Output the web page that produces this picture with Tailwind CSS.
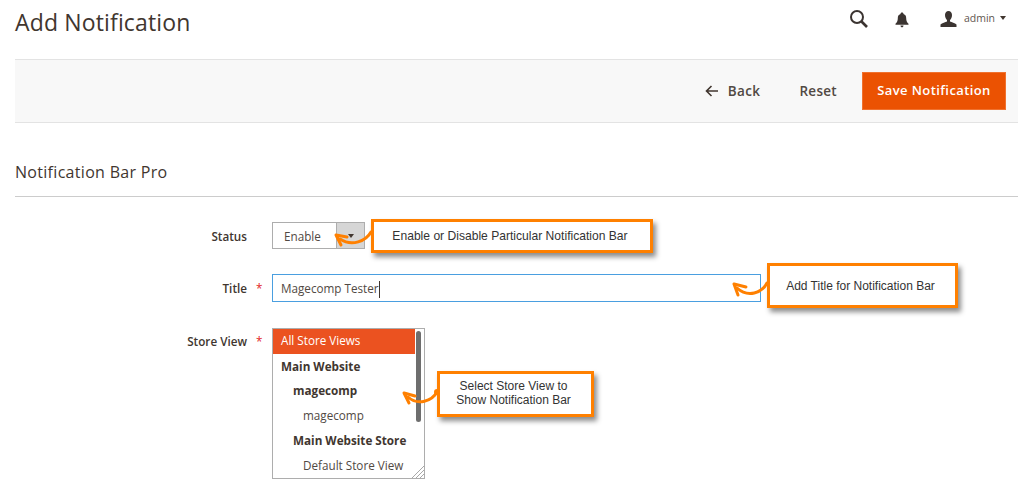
<!DOCTYPE html>
<html lang="en">
<head>
  <meta charset="UTF-8" />
  <title>Add Notification</title>
  <script src="https://cdn.jsdelivr.net/npm/@tailwindcss/browser@4"></script>
</head>
<body class="bg-white text-[#41362f] font-['Open_Sans',sans-serif] h-[488px] overflow-hidden relative">

  <!-- Header -->
  <header class="h-[59px] pl-[15px] pr-[18px] flex justify-between">
    <h1 class="text-[23px] leading-[45px] text-[#41362f] tracking-[0.15px]">Add Notification</h1>
    <div class="flex items-start pt-[9px]">
      <svg class="w-[20px] h-[20px] mr-[26px]" viewBox="0 0 20 20" fill="none" stroke="#3b3431" stroke-width="2"><circle cx="8" cy="8" r="6"/><path d="M12.5 12.5l5.5 5.5" stroke-width="2.6"/></svg>
      <svg class="w-[14px] h-[16px] mt-[3px] mr-[31px]" viewBox="0 0 14 16" fill="#3b3431"><path d="M7 0.5c1 0 1.4.6 1.5 1.4 2 .6 2.7 2.2 2.7 4.3 0 2.5.8 4.2 2.3 5.600v.9H.5v-.9C2 10.400 2.800 8.700 2.800 6.200c0-2.100.7-3.700 2.700-4.300C5.600 1.100 6 .5 7 .5z"/><path d="M5.500 13.500h3c0 1-.6 1.800-1.500 1.800s-1.500-.8-1.500-1.800z"/></svg>
      <svg class="w-[17px] h-[16px] mt-[2px] mr-[7px]" viewBox="0 0 17 16" fill="#3b3431"><path d="M8.500 0c2.200 0 3.500 1.700 3.500 4s-1 4.200-2 5v1.500c1.500.8 5 1.500 6.500 3V16H.5v-2.500c1.500-1.500 5-2.200 6.500-3V9C6 8.200 5 6.300 5 4s1.300-4 3.500-4z"/></svg>
      <span class="text-[10.500px] leading-[18px] text-[#5f5650]">admin</span>
      <span class="ml-[5px] mt-[7px] border-x-[3.500px] border-x-transparent border-t-[4px] border-t-[#41362f]"></span>
    </div>
  </header>

  <!-- Action bar -->
  <div class="ml-[15px] mr-[6px] h-[64px] bg-[#f8f8f8] border-y border-[#e3e3e3] flex items-center justify-end pr-[12px]">
    <svg class="w-[13px] h-[12px] mr-[10px]" viewBox="0 0 13 12" fill="none" stroke="#41362f" stroke-width="1.600"><path d="M13 6H1.500M6.500 1L1.500 6l5 5"/></svg>
    <span class="text-[13.500px] font-semibold tracking-[0.4px] text-[#514943] mr-[39px]">Back</span>
    <span class="text-[13.500px] font-semibold tracking-[0.3px] text-[#514943] mr-[25px]">Reset</span>
    <button class="w-[144px] h-[38px] bg-[#eb5202] border border-[#f0722f] text-white text-[13px] font-semibold tracking-[0.4px]">Save Notification</button>
  </div>

  <!-- Section -->
  <section class="ml-[15px] mr-[6px] mt-[37px] h-[37px] border-b border-[#cccccc]">
    <h2 class="text-[16px] leading-[24px] tracking-[0.3px] text-[#41362f]">Notification Bar Pro</h2>
  </section>

  <!-- Form -->
  <main class="pt-[25px] text-[11.700px]">
    <div class="flex items-center h-[27px]">
      <label class="w-[247px] text-right font-semibold text-[#41362f] pt-[2px]">Status</label>
      <div class="ml-[25px] w-[93px] h-[27px] border border-[#adadad] flex">
        <span class="flex-1 pl-[11px] leading-[26px] text-[#514943]">Enable</span>
        <span class="w-[28px] bg-[#d6d6d6] border-l border-[#adadad] flex items-center justify-center"><span class="border-x-[3.500px] border-x-transparent border-t-[4px] border-t-[#41362f]"></span></span>
      </div>
    </div>

    <div class="flex items-center h-[28px] mt-[25px]">
      <label class="w-[247px] text-right font-semibold text-[#41362f] pt-[2px]">Title</label>
      <span class="w-[25px] pl-[9px] text-[#e22626] pt-[2px]">*</span>
      <div class="w-[489px] h-[28px] border border-[#4a9fe0] pl-[8px] leading-[26px] text-[#514943]">Magecomp Tester<span class="inline-block w-px h-[17px] bg-[#41362f] align-middle"></span></div>
    </div>

    <div class="flex items-start mt-[26px]">
      <label class="w-[247px] text-right font-semibold text-[#41362f] mt-[5px]">Store View</label>
      <span class="w-[25px] pl-[9px] text-[#e22626] mt-[5px]">*</span>
      <div class="w-[153px] h-[151px] border border-[#adadad] relative overflow-hidden leading-[25px] text-[#514943]">
        <div class="w-[142px] h-[25px] bg-[#eb5220] text-white pl-[8px] leading-[23px]">All Store Views</div>
        <div class="font-bold text-[#41362f] pl-[8px] leading-[24px]">Main Website</div>
        <div class="font-bold text-[#41362f] pl-[20px]">magecomp</div>
        <div class="pl-[30px]">magecomp</div>
        <div class="font-bold text-[#41362f] pl-[20px]">Main Website Store</div>
        <div class="pl-[30px]">Default Store View</div>
        <span class="absolute left-[143px] top-[2px] w-[5px] h-[91px] rounded bg-[#6e6e6e]"></span>
        <svg class="absolute right-0 bottom-0 w-[12px] h-[12px]" viewBox="0 0 12 12" stroke="#a8a8a8" stroke-width="1"><path d="M0 12L12 0M4 12l8-8M8 12l4-4"/></svg>
      </div>
    </div>
  </main>

  <!-- Callouts sit over the form -->
  <div class="absolute left-[371px] top-[219px] w-[282px] h-[34px] bg-white border-[3px] border-[#ff8000] shadow-[3px_4px_5px_rgba(0,0,0,0.45)] flex items-center justify-center pr-[4px] font-['Liberation_Sans',sans-serif] text-[12.100px] text-[#333333]">Enable or Disable Particular Notification Bar</div>
  <div class="absolute left-[767px] top-[263px] w-[191px] h-[45px] bg-white border-[3px] border-[#ff8000] shadow-[3px_4px_5px_rgba(0,0,0,0.45)] flex items-center justify-center pr-[4px] font-['Liberation_Sans',sans-serif] text-[12px] text-[#333333]">Add Title for Notification Bar</div>
  <div class="absolute left-[437px] top-[371px] w-[157px] h-[46px] bg-white border-[3px] border-[#ff8000] shadow-[3px_4px_5px_rgba(0,0,0,0.45)] flex items-center justify-center text-center pr-[4px] pb-[2px] leading-[14px] font-['Liberation_Sans',sans-serif] text-[12px] text-[#333333]">Select Store View to<br>Show Notification Bar</div>

  <!-- Curved arrows -->
  <svg class="absolute left-0 top-0 w-[1024px] h-[488px]" viewBox="0 0 1024 488" fill="none" stroke="#ff8000" stroke-width="3" stroke-linecap="round" stroke-linejoin="round">
    <path d="M371 232C366 241 352 247 340 239"/><path d="M336 235L341 245M336 235L347 237"/>
    <path d="M767 283C762 293 748 298 737 288"/><path d="M734 284L738 295M734 284L746 287"/>
    <path d="M437 392C432 401 418 406 408 397"/><path d="M404 393L409 403M404 393L415 396"/>
    <circle cx="437" cy="392" r="1.500" fill="#ff8000"/>
  </svg>
</body>
</html>
